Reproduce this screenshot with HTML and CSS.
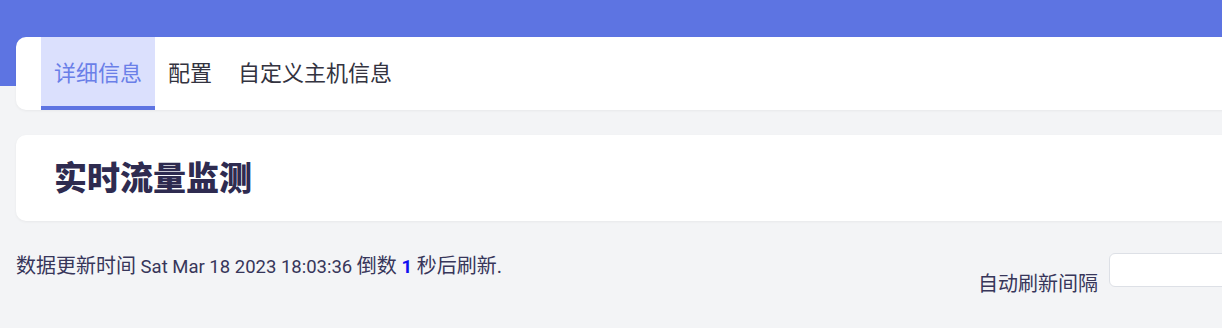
FILE: index.html
```html
<!DOCTYPE html>
<html lang="zh">
<head>
<meta charset="utf-8">
<title>实时流量监测</title>
<link rel="stylesheet" href="styles.css">
</head>
<body>
<div class="page">
  <nav class="card tabs">
    <a class="tab active">详细信息</a>
    <a class="tab">配置</a>
    <a class="tab">自定义主机信息</a>
  </nav>
  <section class="card title-card">
    <h1 class="title">实时流量监测</h1>
  </section>
  <div class="status-row">
    <p class="status">数据更新时间<span class="latin"> Sat Mar 18 2023 18:03:36 </span>倒数<span class="latin"> <span class="count">1</span> </span>秒后刷新.</p>
    <div class="refresh">
      <label class="refresh-label">自动刷新间隔</label>
      <input class="refresh-input" type="text">
    </div>
  </div>
</div>
</body>
</html>
```

FILE: styles.css
```css
html, body {
  margin: 0;
  padding: 0;
}
body {
  width: 1222px;
  height: 328px;
  overflow: hidden;
  background: #f3f4f6;
  font-family: Roboto, "Noto Sans CJK SC", sans-serif;
  color: #37365a;
}
.page {
  background: linear-gradient(#5d74e2 0, #5d74e2 86px, #f3f4f6 86px);
  padding: 37px 0 0 16px;
  margin-right: -60px;
}
.card {
  background: #fff;
  border-radius: 10px;
  box-shadow: 0 1px 3px rgba(0, 0, 0, 0.05);
}
.tabs {
  display: flex;
  height: 73px;
  padding-left: 25px;
}
.tab {
  display: flex;
  align-items: center;
  padding: 0 13px;
  font-size: 22px;
  color: #333340;
  box-sizing: border-box;
  border-bottom: 4px solid transparent;
  padding-bottom: 1px;
}
.tab.active {
  background: #dbe0fd;
  color: #6a7fe8;
  border-bottom-color: #5e74e2;
}
.title-card {
  margin-top: 25px;
  height: 86px;
  display: flex;
  align-items: center;
  padding-left: 38px;
}
.title {
  margin: 0 0 4px;
  font-size: 33px;
  font-weight: 900;
  color: #2e2b50;
  font-family: "Noto Sans CJK SC", sans-serif;
}
.status-row {
  display: flex;
  justify-content: space-between;
  margin-top: 32px;
}
.status {
  margin: 0;
  font-size: 20px;
  line-height: 26px;
  color: #37365a;
}
.latin {
  font-size: 18.5px;
}
.count {
  color: #1010f0;
  font-weight: 700;
}
.refresh {
  display: flex;
  align-items: flex-start;
  gap: 11px;
}
.refresh-label {
  font-size: 20px;
  line-height: 26px;
  margin-top: 18px;
  color: #37365a;
}
.refresh-input {
  width: 173px;
  height: 34px;
  box-sizing: border-box;
  border: 1px solid #dde0e6;
  border-radius: 6px;
  background: #fff;
  margin: 0;
}
```
